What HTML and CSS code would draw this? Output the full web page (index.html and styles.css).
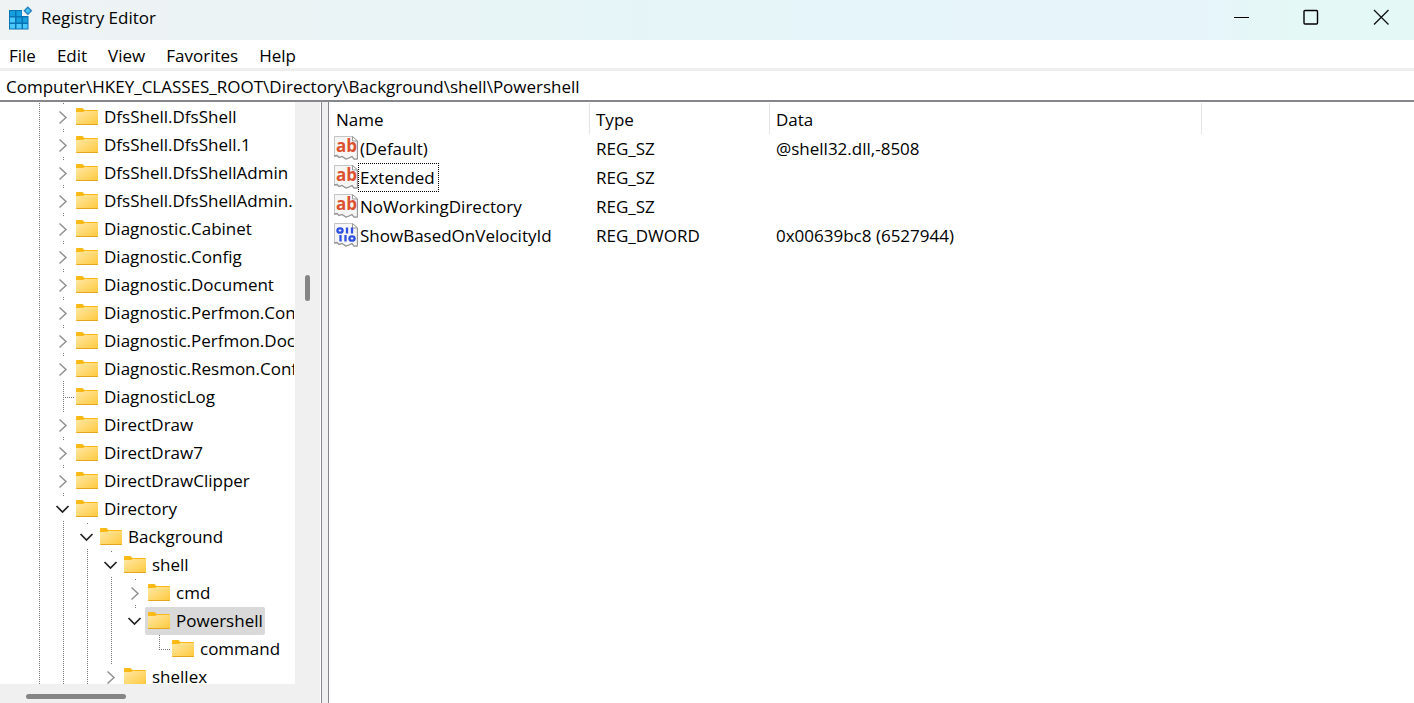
FILE: index.html
```html
<!DOCTYPE html>
<html lang="en">
<head>
<meta charset="utf-8">
<title>Registry Editor</title>
<link rel="stylesheet" href="styles.css">
</head>
<body>
<svg class="sprite" aria-hidden="true">
  <defs>
    <linearGradient id="folder-fill" x1="0" y1="0" x2="1" y2="1">
      <stop offset="0" stop-color="#ffe9a6"/>
      <stop offset="1" stop-color="#ffc83c"/>
    </linearGradient>
    <symbol id="folder" viewBox="0 0 22 17">
      <path d="M0 1Q0 0 1 0H6.500L8.500 2H21Q22 2 22 3V8H0Z" fill="#fbb917"/>
      <path d="M0 4H7L9 3H22V16Q22 17 21 17H1Q0 17 0 16Z" fill="url(#folder-fill)"/>
      <path d="M0 15.500V16Q0 17 1 17H21Q22 17 22 16V15.500Q22 16 21 16H1Q0 16 0 15.500Z" fill="#e5a520"/>
    </symbol>
    <symbol id="closed" viewBox="0 0 24 28">
      <path d="M8.500 8.500L15 14.500L8.500 20.500" fill="none" stroke="#929292" stroke-width="1.500"/>
    </symbol>
    <symbol id="open" viewBox="0 0 24 28">
      <path d="M5.500 11L11.500 17L17.500 11" fill="none" stroke="#222" stroke-width="1.700"/>
    </symbol>
    <symbol id="page" viewBox="0 0 24 24">
      <path d="M.5.5H18.500L23.500 5V23L20 23.200L18 20.500L15 22L12 23L8 20.500L5 21.500L3 19.500L.5 20Z" fill="#f6f6f6" stroke="#c4c4c4"/>
      <path d="M18.500.5V5H23.500Z" fill="#fff" stroke="#999"/>
      <path d="M23.500 5V23L20 23.200L18 20.500L15 22L12 23L8 20.500L5 21.500L3 19.500L0 20" fill="none" stroke="#969696" stroke-width="1.300"/>
    </symbol>
  </defs>
</svg>

<header class="titlebar">
  <svg class="app-icon" viewBox="0 0 24 24" aria-hidden="true">
    <path d="M0 4H13V10H19.500V23.500H0Z" fill="#0873b4"/>
    <path d="M1 5H6V10H1ZM7.500 5H12.500V10H7.500ZM7.500 11.500H12.500V16.500H7.500ZM14 11.500H18.500V16.500H14Z" fill="#159fdc"/>
    <path d="M1 11.500H6V16.500H1ZM1 18H6V22.500H1ZM7.500 18H12.500V22.500H7.500ZM14 18H18.500V22.500H14Z" fill="#4cc9fb"/>
    <path d="M18.800.3L23.300 4.800L18.800 9.300L14.300 4.800Z" fill="#2583bd"/>
    <path d="M18.800 2.300L21.300 4.800L18.800 7.300L16.300 4.800Z" fill="#45c5f3"/>
  </svg>
  <h1 class="title">Registry Editor</h1>
  <div class="controls">
    <button class="control" aria-label="Minimize"><svg viewBox="0 0 16 16"><path d="M1 8.500H16" stroke="#000"/></svg></button>
    <button class="control" aria-label="Maximize"><svg viewBox="0 0 16 16"><rect x="1" y="1.500" width="13.500" height="13.500" rx="1" fill="none" stroke="#000" stroke-width="1.400"/></svg></button>
    <button class="control" aria-label="Close"><svg viewBox="0 0 16 16"><path d="M1 1L15.500 15.500M15.500 1L1 15.500" stroke="#111" stroke-width="1.300"/></svg></button>
  </div>
</header>

<nav class="menubar">
  <button class="menu">File</button>
  <button class="menu">Edit</button>
  <button class="menu">View</button>
  <button class="menu">Favorites</button>
  <button class="menu">Help</button>
</nav>

<input class="address" type="text" aria-label="Registry path" value="Computer\HKEY_CLASSES_ROOT\Directory\Background\shell\Powershell">

<main class="panes">
  <section class="tree-pane">
    <ul class="tree" role="tree" aria-label="Registry keys">
      <li class="row"><i class="guide"></i><i class="toggle"><svg><use href="#closed"/></svg></i><span class="key"><svg><use href="#folder"/></svg>DfsShell.DfsShell</span></li>
      <li class="row"><i class="guide"></i><i class="toggle"><svg><use href="#closed"/></svg></i><span class="key"><svg><use href="#folder"/></svg>DfsShell.DfsShell.1</span></li>
      <li class="row"><i class="guide"></i><i class="toggle"><svg><use href="#closed"/></svg></i><span class="key"><svg><use href="#folder"/></svg>DfsShell.DfsShellAdmin</span></li>
      <li class="row"><i class="guide"></i><i class="toggle"><svg><use href="#closed"/></svg></i><span class="key"><svg><use href="#folder"/></svg>DfsShell.DfsShellAdmin.1</span></li>
      <li class="row"><i class="guide"></i><i class="toggle"><svg><use href="#closed"/></svg></i><span class="key"><svg><use href="#folder"/></svg>Diagnostic.Cabinet</span></li>
      <li class="row"><i class="guide"></i><i class="toggle"><svg><use href="#closed"/></svg></i><span class="key"><svg><use href="#folder"/></svg>Diagnostic.Config</span></li>
      <li class="row"><i class="guide"></i><i class="toggle"><svg><use href="#closed"/></svg></i><span class="key"><svg><use href="#folder"/></svg>Diagnostic.Document</span></li>
      <li class="row"><i class="guide"></i><i class="toggle"><svg><use href="#closed"/></svg></i><span class="key"><svg><use href="#folder"/></svg>Diagnostic.Perfmon.Config</span></li>
      <li class="row"><i class="guide"></i><i class="toggle"><svg><use href="#closed"/></svg></i><span class="key"><svg><use href="#folder"/></svg>Diagnostic.Perfmon.Document</span></li>
      <li class="row"><i class="guide"></i><i class="toggle"><svg><use href="#closed"/></svg></i><span class="key"><svg><use href="#folder"/></svg>Diagnostic.Resmon.Config</span></li>
      <li class="row"><i class="guide"></i><i class="guide branch"></i><span class="key"><svg><use href="#folder"/></svg>DiagnosticLog</span></li>
      <li class="row"><i class="guide"></i><i class="toggle"><svg><use href="#closed"/></svg></i><span class="key"><svg><use href="#folder"/></svg>DirectDraw</span></li>
      <li class="row"><i class="guide"></i><i class="toggle"><svg><use href="#closed"/></svg></i><span class="key"><svg><use href="#folder"/></svg>DirectDraw7</span></li>
      <li class="row"><i class="guide"></i><i class="toggle"><svg><use href="#closed"/></svg></i><span class="key"><svg><use href="#folder"/></svg>DirectDrawClipper</span></li>
      <li class="row"><i class="guide"></i><i class="toggle"><svg><use href="#open"/></svg></i><span class="key"><svg><use href="#folder"/></svg>Directory</span></li>
      <li class="row"><i class="guide"></i><i class="guide"></i><i class="toggle"><svg><use href="#open"/></svg></i><span class="key"><svg><use href="#folder"/></svg>Background</span></li>
      <li class="row"><i class="guide"></i><i class="guide"></i><i class="guide"></i><i class="toggle"><svg><use href="#open"/></svg></i><span class="key"><svg><use href="#folder"/></svg>shell</span></li>
      <li class="row"><i class="guide"></i><i class="guide"></i><i class="guide"></i><i class="guide"></i><i class="toggle"><svg><use href="#closed"/></svg></i><span class="key"><svg><use href="#folder"/></svg>cmd</span></li>
      <li class="row"><i class="guide"></i><i class="guide"></i><i class="guide"></i><i class="guide"></i><i class="toggle last"><svg><use href="#open"/></svg></i><span class="key selected"><svg><use href="#folder"/></svg>Powershell</span></li>
      <li class="row"><i class="guide"></i><i class="guide"></i><i class="guide"></i><i class="guide"></i><i class="guide blank"></i><i class="guide branch end"></i><span class="key"><svg><use href="#folder"/></svg>command</span></li>
      <li class="row"><i class="guide"></i><i class="guide"></i><i class="guide"></i><i class="toggle last"><svg><use href="#closed"/></svg></i><span class="key"><svg><use href="#folder"/></svg>shellex</span></li>
    </ul>
    <div class="vscroll"><div class="vthumb"></div></div>
    <div class="hscroll"><div class="hthumb"></div></div>
  </section>

  <section class="value-pane">
    <table class="values">
      <colgroup><col class="col-name"><col class="col-type"><col class="col-data"><col></colgroup>
      <thead>
        <tr><th>Name</th><th>Type</th><th>Data</th><th></th></tr>
      </thead>
      <tbody>
        <tr><td><div class="value"><svg viewBox="0 0 24 24"><use href="#page"/><text class="ab" x="2" y="16">ab</text></svg><span class="name">(Default)</span></div></td><td>REG_SZ</td><td>@shell32.dll,-8508</td><td></td></tr>
        <tr><td><div class="value"><svg viewBox="0 0 24 24"><use href="#page"/><text class="ab" x="2" y="16">ab</text></svg><span class="name focused">Extended</span></div></td><td>REG_SZ</td><td></td><td></td></tr>
        <tr><td><div class="value"><svg viewBox="0 0 24 24"><use href="#page"/><text class="ab" x="2" y="16">ab</text></svg><span class="name">NoWorkingDirectory</span></div></td><td>REG_SZ</td><td></td><td></td></tr>
        <tr><td><div class="value"><svg viewBox="0 0 24 24"><use href="#page"/><g fill="none" stroke="#2f50e0" stroke-width="2.300"><ellipse cx="6" cy="7.500" rx="2.600" ry="2.200"/><path d="M13 4.500V10.500M18 4.500V10.500M6.500 12V18.500M11.500 12V18.500"/><ellipse cx="18" cy="15.500" rx="2.600" ry="2.200"/></g></svg><span class="name">ShowBasedOnVelocityId</span></div></td><td>REG_DWORD</td><td>0x00639bc8 (6527944)</td><td></td></tr>
      </tbody>
    </table>
  </section>
</main>
</body>
</html>
```
FILE: styles.css
```css
* { box-sizing: border-box; }

body {
  margin: 0;
  height: 100vh;
  display: flex;
  flex-direction: column;
  overflow: hidden;
  background: #fff;
  color: #000;
  font: 17px/28px "Open Sans", "Noto Sans", sans-serif;
}

button, input {
  margin: 0;
  padding: 0;
  border: 0;
  background: none;
  color: inherit;
  font: inherit;
}

svg { display: block; flex: none; }
.sprite { position: absolute; width: 0; height: 0; }

.titlebar {
  flex: none;
  display: flex;
  height: 40px;
  padding-left: 9px;
  background: linear-gradient(90deg, #eff3f4 0%, #ebf3f5 20%, #e5f5f7 45%, #e7f5fb 84%, #e4f8f5 92%);
}
.app-icon { width: 24px; height: 24px; margin-top: 6px; }
.title { margin: 4px auto 0 8px; font-size: 17px; font-weight: 400; }
.controls { display: flex; gap: 4px; }
.control { display: flex; justify-content: center; width: 66px; padding-top: 9px; }
.control svg { width: 16px; height: 16px; }

.menubar {
  flex: none;
  display: flex;
  gap: 21px;
  height: 31px;
  padding: 2px 9px 0;
  border-bottom: 3px solid #eee;
}
.menu { height: 28px; }

.address {
  flex: none;
  width: 100%;
  height: 31px;
  padding: 2px 6px 0;
  border-bottom: 2px solid #85878d;
  outline: none;
}

.panes { flex: 1; min-height: 0; display: flex; }

.tree-pane {
  flex: none;
  width: 322px;
  display: grid;
  grid-template: minmax(0, 1fr) 19px / minmax(0, 1fr) 26px;
  border-right: 1px solid #85878d;
}
.tree {
  margin: 0 1px 0 0;
  padding: 1px 0 0 27px;
  list-style: none;
  overflow: hidden;
}
.row { display: flex; height: 28px; white-space: nowrap; }
.guide, .toggle {
  flex: none;
  width: 24px;
  height: 28px;
  background-repeat: no-repeat;
}
.guide {
  background-image: repeating-linear-gradient(#777 0 1px, transparent 1px 2px);
  background-position: 12px 0;
  background-size: 1px 28px;
}
.branch {
  background-image: repeating-linear-gradient(#777 0 1px, transparent 1px 2px), repeating-linear-gradient(90deg, #777 0 1px, transparent 1px 2px);
  background-position: 12px 0, 12px 14px;
  background-size: 1px 28px, 12px 1px;
}
.branch.end { background-size: 1px 15px, 12px 1px; }
.blank { background: none; }
.toggle {
  background-image: linear-gradient(#777, #777), linear-gradient(#777, #777);
  background-position: 12px 0, 12px 26px;
  background-size: 1px 1px;
}
.toggle.last { background-size: 1px 1px, 0 0; }
.toggle svg { width: 24px; height: 28px; }
.key {
  display: flex;
  gap: 6px;
  margin-left: -2px;
  padding: 0 2px 0 3px;
  border-radius: 2px;
}
.key svg { width: 22px; height: 17px; margin-top: 5px; }
.selected { background: #d9d9d9; }

.vscroll { background: #f0f0f0; border-right: 1px solid #fff; }
.vthumb {
  width: 5px;
  height: 26px;
  margin: 173px 0 0 10px;
  border-radius: 3px;
  background: #858585;
}
.hscroll { grid-column: 1 / 3; background: #f0f0f0; border-right: 1px solid #fff; }
.hthumb {
  width: 100px;
  height: 5px;
  margin: 10px 0 0 26px;
  border-radius: 3px;
  background: #858585;
}

.value-pane {
  flex: 1;
  min-width: 0;
  margin-left: 6px;
  border-left: 1px solid #85878d;
  box-shadow: -6px 0 #f0f0f0;
}
.values {
  width: 100%;
  table-layout: fixed;
  border-collapse: separate;
  border-spacing: 0;
  padding-top: 1px;
}
.col-name { width: 261px; }
.col-type { width: 180px; }
.col-data { width: 432px; }
.values th, .values td {
  height: 29px;
  padding: 0 0 0 6px;
  font-weight: 400;
  text-align: left;
  white-space: nowrap;
}
.values th { height: 31px; padding-top: 2px; border-right: 1px solid #e5e5e5; }
.values th:first-child { padding-left: 7px; }
.values th:last-child { border-right: 0; }
.values td:first-child { padding-left: 5px; }
.value { display: flex; height: 29px; }
.value svg { width: 24px; height: 24px; margin-top: 2px; }
.name { height: 29px; padding: 0 3px 0 1px; border: 1px solid transparent; }
.focused { border: 1px dotted #000; }
.ab { fill: #dc5230; font: 700 17px "Open Sans", sans-serif; }
```
